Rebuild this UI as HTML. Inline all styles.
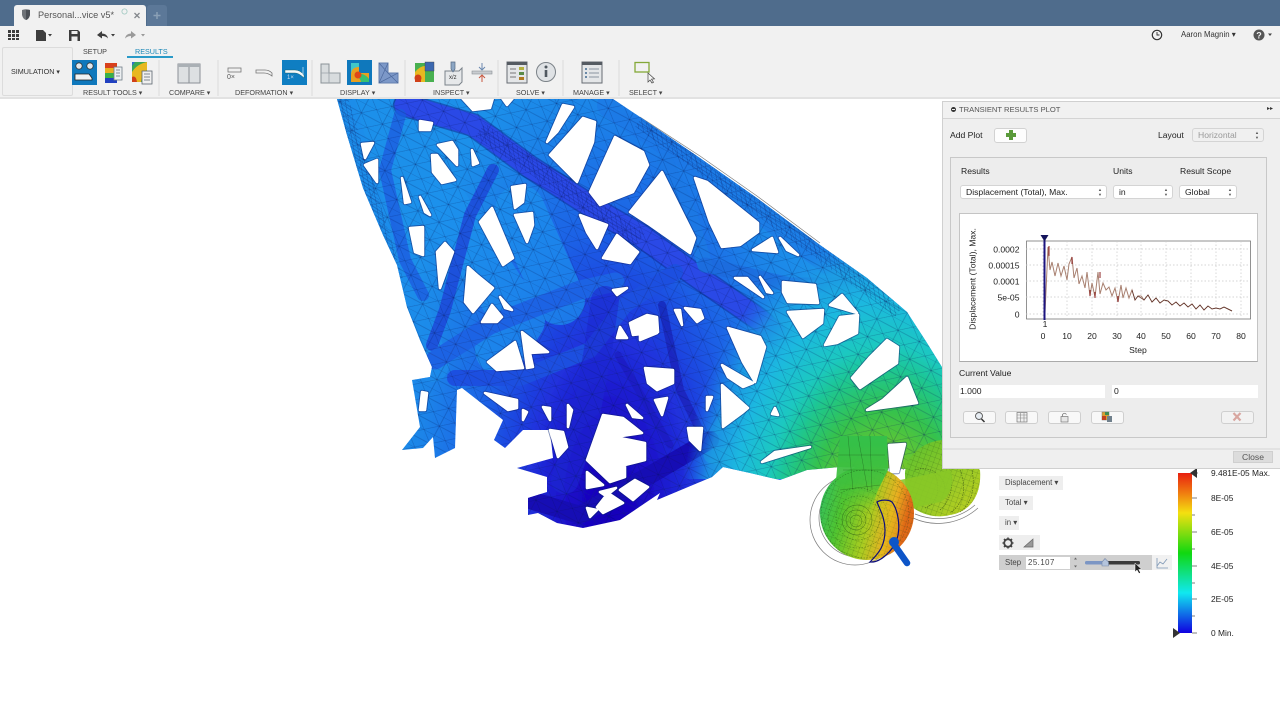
<!DOCTYPE html>
<html><head><meta charset="utf-8"><title>Simulation</title>
<style>
html,body{margin:0;padding:0;background:#fff;width:1280px;height:720px;overflow:hidden;font-family:"Liberation Sans",sans-serif;color:#333}
.a{position:absolute;white-space:nowrap;line-height:1}
.b{position:absolute;box-sizing:border-box}
.r{font-size:7.2px;color:#444}
.l{font-size:7.2px;color:#444;top:89px}
.d{font-size:8.6px;color:#222}
.sel{position:absolute;box-sizing:border-box;background:#fff;border:1px solid #d4d4d4;border-radius:3px;font-size:8.6px;color:#222;line-height:13px;padding-left:5px}
.sel i{position:absolute;right:4px;top:2px;font-style:normal;font-size:4px;line-height:4.5px;color:#555}
.btn{position:absolute;box-sizing:border-box;background:#f8f8f8;border:1px solid #cfcfcf;border-radius:3px;height:13px;top:411px;width:33px}
svg{position:absolute;left:0;top:0}
</style></head><body>

<!-- chrome and control backgrounds -->
<div style="position:absolute;left:0;top:0;z-index:0">
<div class="b" style="left:0;top:0;width:1280px;height:26px;background:#4f6c8c"></div>
<div class="b" style="left:0;top:26px;width:1280px;height:71px;background:#f1f1f1"></div>
<div class="b" style="left:0;top:97px;width:1280px;height:2px;background:#e2e2e2"></div>
<div class="b" style="left:14px;top:5px;width:132px;height:21px;background:#f1f1f1;border-radius:3px 3px 0 0"></div>
<div class="b" style="left:147px;top:5px;width:20px;height:21px;background:#5c7898;border-radius:3px 3px 0 0"></div>
<div class="b" style="left:2px;top:47px;width:71px;height:49px;background:#f0f0f0;border:1px solid #dcdcdc;border-radius:2px"></div>
<div class="b" style="left:127px;top:56px;width:46px;height:2px;background:#2a9ac8"></div>
<div class="b" style="left:999px;top:476px;width:64px;height:14px;background:#eee"></div>
<div class="b" style="left:999px;top:496px;width:34px;height:14px;background:#eee"></div>
<div class="b" style="left:999px;top:516px;width:20px;height:14px;background:#eee"></div>
<div class="b" style="left:999px;top:535px;width:41px;height:15px;background:#eee"></div>
<div class="b" style="left:999px;top:555px;width:153px;height:15px;background:#cfcfcf"></div>
<div class="b" style="left:1152px;top:555px;width:20px;height:15px;background:#f1f1f1"></div>
<div class="b" style="left:1026px;top:557px;width:44px;height:12px;background:#fff"></div>
</div>

<svg width="1280" height="720" viewBox="0 0 1280 720" style="z-index:1">
<defs>
<clipPath id="vp"><rect x="0" y="99" width="1280" height="621"/></clipPath>
<radialGradient id="base" gradientUnits="userSpaceOnUse" cx="0" cy="0" r="1" gradientTransform="translate(610 510) scale(225 470)">
<stop offset="0" stop-color="#1200b8"/><stop offset=".15" stop-color="#1a08c4"/><stop offset=".36" stop-color="#2030dc"/><stop offset=".6" stop-color="#1c62e6"/><stop offset=".85" stop-color="#1a84e8"/><stop offset="1" stop-color="#1c90ea"/>
</radialGradient>
<radialGradient id="heat" gradientUnits="userSpaceOnUse" cx="0" cy="0" r="1" gradientTransform="translate(885 525) scale(205 300)">
<stop offset="0" stop-color="#c8d420"/><stop offset=".2" stop-color="#78c828"/><stop offset=".38" stop-color="#36c24c"/><stop offset=".5" stop-color="#20c688"/><stop offset=".6" stop-color="#1cc8c0"/><stop offset=".75" stop-color="#1cb8e0"/><stop offset=".88" stop-color="#1ca0e4" stop-opacity=".8"/><stop offset="1" stop-color="#1a80e8" stop-opacity="0"/>
</radialGradient>
<linearGradient id="ball" x1="0" y1="0" x2="1" y2=".25">
<stop offset="0" stop-color="#2cc06a"/><stop offset=".32" stop-color="#50c430"/><stop offset=".62" stop-color="#a8cc20"/><stop offset=".84" stop-color="#e8b020"/><stop offset="1" stop-color="#e06818"/>
</linearGradient>
<linearGradient id="coil" x1="0" y1="0" x2="1" y2="1">
<stop offset="0" stop-color="#58c030"/><stop offset="1" stop-color="#c4d020"/>
</linearGradient>
<linearGradient id="armfade" gradientUnits="userSpaceOnUse" x1="0" y1="440" x2="0" y2="512">
<stop offset="0" stop-color="#34c048"/><stop offset=".6" stop-color="#40c03c" stop-opacity=".9"/><stop offset="1" stop-color="#50c430" stop-opacity="0"/>
</linearGradient>
<pattern id="mesh" width="24" height="20" patternUnits="userSpaceOnUse" patternTransform="rotate(28)">
<path d="M0 0H24M0 10H24M0 0L12 10L24 0M0 20L12 10L24 20M12 0V20" fill="none" stroke="#08185a" stroke-width=".5" stroke-opacity=".42"/>
</pattern>
<pattern id="fine" width="6" height="6" patternUnits="userSpaceOnUse" patternTransform="rotate(35)">
<path d="M0 0H6M0 3H6M0 0L6 6" fill="none" stroke="#06145a" stroke-width=".4" stroke-opacity=".6"/>
</pattern>
<pattern id="ballmesh" width="5" height="5" patternUnits="userSpaceOnUse" patternTransform="rotate(20)">
<path d="M0 0H5M0 0V5" fill="none" stroke="#163a10" stroke-width=".4" stroke-opacity=".55"/>
</pattern>
<filter id="soft" filterUnits="userSpaceOnUse" x="0" y="0" width="1280" height="720"><feGaussianBlur stdDeviation=".35"/></filter>
<clipPath id="sil"><path id="silp" d="M337 99 L613 99 L640 117 L700 158 L757 198 L820 245 L867 278 L907 312 L927 343 L945 372 L945 470 L840 467 L807 470 L780 480 L750 473 L723 467 L712 477 L657 500 L660 493 L620 520 L583 528 L557 523 L538 513 L528 515 L528 498 L547 492 L547 477 L517 468 L553 458 L550 430 L523 430 L505 448 L494 440 L503 420 L462 388 L457 390 L455 448 L435 458 L433 437 L423 448 L402 450 L420 427 L412 380 L430 377 L432 367 L420 340 L407 307 L397 265 L383 235 L363 188 L347 135Z"/></clipPath>
<g id="holes">
<path d="M362 144L373 143L365 158ZM365 165L377 160L377 182ZM462 98L493 98L490 108L473 110ZM502 98L513 98L507 105ZM420 121L432 123L430 130L420 130ZM438 145L452 142L457 150L457 165ZM432 155L437 155L455 180L442 183L433 172ZM472 150L478 163L473 165ZM402 178L410 202L405 203ZM410 228L423 227L423 255L415 252ZM420 197L430 215L425 212ZM437 252L445 243L453 252L440 288ZM512 187L525 185L523 202L515 208ZM480 222L492 208L513 258L503 265ZM515 215L532 213L533 225L527 242ZM468 267L477 275L493 288L473 312L465 302ZM550 155L583 118L595 122L593 142L577 182ZM563 105L573 107L557 132L547 142ZM615 137L643 152L648 165L633 192L600 205L590 192ZM580 215L607 225L597 248L587 232ZM617 235L638 252L630 263L603 258ZM630 212L662 172L695 238L690 253L650 225Z"/>
<path d="M695 178L707 182L758 223L758 232L740 245L722 247L710 222ZM753 250L772 238L777 252ZM780 238L798 255L787 250ZM735 278L747 278L763 297ZM760 277L772 293L767 292ZM783 282L815 285L818 303L788 302L783 292ZM842 295L857 313L830 305ZM788 312L823 310L822 323L803 337ZM840 317L858 315L857 333L837 343L825 345ZM887 340L898 347L897 363L860 388L852 378L870 357ZM907 378L917 403L867 410L883 400ZM728 328L760 337L765 347L755 382L743 362ZM722 365L753 383L743 387L728 377ZM722 385L748 408L742 413L723 427ZM688 428L702 428L700 450L690 440ZM707 397L712 397L707 410ZM685 308L700 310L703 318L697 322ZM675 310L680 310L682 325ZM640 332L657 333L640 340ZM762 462L810 447L775 452ZM775 408L778 415L772 414Z"/>
<path d="M482 322L492 305L502 317L497 322ZM500 297L512 310L505 308ZM522 332L548 352L530 353L533 367L527 368ZM488 362L515 342L523 368L497 370ZM485 393L517 400L517 408L508 410ZM620 327L627 338L617 338ZM630 323L647 315L657 317L658 332L633 335ZM613 290L627 288L617 295ZM645 368L673 370L673 383L657 390L648 383ZM655 400L667 398L662 415ZM627 405L642 418L633 417ZM603 415L623 418L642 433L615 437L645 443L645 460L625 465L625 477L610 482L587 460ZM550 430L563 432L567 447L558 457ZM587 472L603 485L587 488ZM597 507L608 493L623 503L603 513ZM620 490L635 480L648 487L633 500ZM587 508L597 510L590 517ZM543 407L550 408L550 420ZM568 405L572 410L568 427ZM523 410L527 412L523 420ZM422 392L427 393L425 410L420 410ZM600 492L616 488L606 496Z"/>
<path d="M889 445L905 444L898 472L891 472Z"/>
</g>
</defs>

<g clip-path="url(#vp)">
<g filter="url(#soft)">
<!-- grey undeformed outlines -->
<g fill="none" stroke="#7c7c7c" stroke-width=".7">
<circle cx="855" cy="520" r="45"/><circle cx="858" cy="518" r="39"/>
<path d="M903 470C912 450 925 442 945 445M899 472C908 447 925 438 945 440"/>
<path d="M915 514C935 522 958 520 975 505M913 518C935 528 960 524 978 508"/>
<path d="M640 117L700 156L757 196L820 243M664 173L696 236M760 222L756 233"/>
</g>

<use href="#silp" fill="url(#base)"/>
<g clip-path="url(#sil)">
<g fill="none" stroke-linecap="round" stroke-linejoin="round">
<path d="M337 99L365 200L400 275L432 365" stroke="#1e8cea" stroke-width="34" opacity=".8"/>
<path d="M440 200L520 320L500 350M520 210L560 300" stroke="#1c92ec" stroke-width="50" opacity=".7"/>
<path d="M610 105L700 165L820 255L880 300L925 360L930 440" stroke="#1c74e4" stroke-width="26" opacity=".6"/>
<path d="M405 105L473 125L530 167L605 215L640 235L695 275L760 320L810 365L845 415L865 480" stroke="#0a2090" stroke-width="24" opacity=".5"/>
<path d="M405 105L473 125L530 167L605 215L640 235L695 275L760 320L810 365L845 415L865 480" stroke="#2a48e6" stroke-width="21"/>
<path d="M493 170L470 215L445 310L432 345" stroke="#1c48d8" stroke-width="12" opacity=".85"/>
<path d="M400 115L385 170L405 260L423 295" stroke="#1c5ce0" stroke-width="12" opacity=".8"/>
<path d="M435 360L490 325L580 290L615 282" stroke="#1e64e4" stroke-width="19"/>
<path d="M455 378L520 378L590 350L625 305L675 272" stroke="#1e50e0" stroke-width="16"/>
<path d="M605 300L598 350L585 420L565 480" stroke="#1c28d0" stroke-width="28" opacity=".6"/>
<path d="M662 305L680 390L712 455" stroke="#1616a8" stroke-width="8" opacity=".55"/>
<path d="M618 355L670 445" stroke="#1818b8" stroke-width="7" opacity=".55"/>
<path d="M665 160L690 215L705 265" stroke="#1a78e4" stroke-width="15"/>
<path d="M705 265L790 285L845 285" stroke="#1a6adc" stroke-width="15" opacity=".8"/>
<path d="M715 430L745 395L785 345L835 290" stroke="#1a70dc" stroke-width="11" opacity=".8"/>
<path d="M712 455L770 462L850 440" stroke="#1c70d8" stroke-width="17"/>
<path d="M530 500L580 515L650 475L710 440" stroke="#1408b4" stroke-width="18"/>
<path d="M880 355L905 400L880 420L845 425" stroke="#1c8cd8" stroke-width="14"/>
</g>
<rect x="330" y="99" width="620" height="380" fill="url(#heat)"/>
<rect x="330" y="99" width="620" height="440" fill="url(#mesh)"/>
<path d="M340 99L395 280M640 120L900 310M480 130L640 240" stroke="url(#fine)" stroke-width="16" fill="none"/>
</g>

<!-- holes: dark rim then white -->
<use href="#holes" fill="#0a1e70" stroke="#0a1e70" stroke-width="4.4" stroke-linejoin="round" opacity=".5"/>
<use href="#holes" fill="#fff" stroke="#fff" stroke-width="2.6" stroke-linejoin="round"/>

<!-- coil -->
<path d="M905 475C905 455 925 440 945 440L980 470C982 495 970 512 950 515C930 520 912 510 906 500Z" fill="url(#coil)"/>
<path d="M905 475C905 455 925 440 945 440L980 470C982 495 970 512 950 515C930 520 912 510 906 500Z" fill="url(#ballmesh)"/>
<g fill="none" stroke="#253a10" stroke-width=".6" stroke-opacity=".7" stroke-dasharray="1.5 1"><path d="M948 465C955 480 952 500 940 510M935 475C942 490 935 505 925 508M960 470C968 490 962 505 950 513M972 470C976 490 970 505 960 512M915 470C930 465 945 475 945 490"/></g>
<path d="M900 480L950 470C956 480 950 498 940 502L903 510Z" fill="#88c828" opacity=".9"/>

<!-- ball -->
<circle cx="867" cy="513" r="47" fill="url(#ball)"/>
<circle cx="867" cy="513" r="47" fill="url(#ballmesh)"/>
<path d="M840 436L887 436L888 470L878 490L870 512L850 512L836 480Z" fill="url(#armfade)"/>
<g fill="none" stroke="#123a10" stroke-width=".5" stroke-opacity=".6">
<circle cx="857" cy="520" r="15"/><circle cx="856" cy="520" r="10"/><circle cx="856" cy="521" r="6"/><circle cx="858" cy="518" r="22" stroke-dasharray="1.5 1.5"/><circle cx="858" cy="518" r="30" stroke-dasharray="1.5 1.5"/><circle cx="865" cy="514" r="44" stroke-dasharray="1.5 1.5"/>
<path d="M848 436L853 490M858 436L868 492M870 436L872 490M843 470L885 470M838 455L885 455M840 490L880 485" stroke-opacity=".45"/>
</g>
<!-- crescent + arrow -->
<path d="M877 502C880 500 888 499 892 502C898 510 900 525 898 535C895 550 880 563 870 562C880 552 885 545 885 530C885 518 880 510 877 502Z" fill="#e4c41c" fill-opacity=".35" stroke="#10107c" stroke-width="1.2"/>
<path d="M893 543L907 563" stroke="#0f55c8" stroke-width="6.5" stroke-linecap="round"/>
<circle cx="894" cy="542" r="5" fill="#0f55c8"/>
</g>
</g>

<!-- ribbon icons -->
<g>
<rect x="72" y="60" width="25" height="25" fill="#0f78bc"/>
<circle cx="79" cy="66" r="3.2" fill="#dfe8ee" stroke="#333" stroke-width=".8"/><circle cx="90" cy="66" r="3.2" fill="#dfe8ee" stroke="#333" stroke-width=".8"/>
<path d="M75 74h14l3 4v2H75z" fill="#eef2f4" stroke="#222" stroke-width=".8"/>
<rect x="105" y="63" width="12" height="5" fill="#d8401c"/><rect x="105" y="68" width="12" height="5" fill="#e8b020"/><rect x="105" y="73" width="12" height="5" fill="#38b048"/><rect x="105" y="78" width="12" height="5" fill="#2040c0"/>
<rect x="114" y="67" width="8" height="13" fill="#eceff1" stroke="#707c88" stroke-width=".8"/><path d="M116 70h4M116 73h4M116 76h4" stroke="#606c78" stroke-width=".8"/>
<rect x="132" y="62" width="15" height="20" fill="#38a858"/><path d="M132 82V72Q137 64 147 62V70Q142 74 141 82Z" fill="#e8b820"/><path d="M132 82V77Q136 75 137 82Z" fill="#d04018"/><path d="M147 62H135L132 66V62Z" fill="#3070c8"/>
<rect x="142" y="71" width="10" height="13" fill="#f0f0f0" stroke="#5c6670" stroke-width=".8"/><path d="M144 74h6M144 77h6M144 80h6" stroke="#5c6670" stroke-width=".7"/>
<rect x="178" y="64" width="22" height="19" fill="#dde0e2" stroke="#8a9096"/><rect x="178" y="64" width="22" height="3" fill="#aab0b5"/><path d="M189 67V83" stroke="#8a9096"/>
<rect x="228" y="68" width="13" height="4" fill="#f0f0f0" stroke="#777" stroke-width=".8"/>
<path d="M256 70h9q4 0 7 3v3q-4-3-8-3h-8z" fill="#f0f0f0" stroke="#777" stroke-width=".8"/>
<rect x="282" y="60" width="25" height="25" fill="#0f7ec2"/><path d="M285 70h10q5 0 9 5v3q-5-5-9-5h-10z" fill="#f4f8fa" stroke="#155" stroke-width=".4"/><path d="M303 67v8" stroke="#bde" stroke-width=".8"/>
<path d="M321 64h8v9h11v10h-19z" fill="#d8dcde" stroke="#8a9298"/><path d="M321 73h19M329 73v10" stroke="#9aa2a8" stroke-width=".8"/>
<rect x="347" y="60" width="25" height="25" fill="#0f78bc"/><path d="M351 63h8v10h10v9h-18z" fill="#e8a020"/><path d="M351 63h8v4q-8 0-8 8z" fill="#40c8c8"/><path d="M369 82h-8q-1-5-6-6v-3q10 0 14 6z" fill="#38c070"/><circle cx="358" cy="75" r="3.5" fill="#e04818"/>
<path d="M379 63h9v10h10v10h-19z" fill="#7c98c8" stroke="#6480b0"/><path d="M379 63l9 10M388 63l-9 20M388 73l10 10M398 73l-19 10" stroke="#4c689c" stroke-width=".7"/>
<rect x="415" y="63" width="19" height="19" fill="#48b050"/><path d="M415 82V72Q420 66 425 66V82Z" fill="#e8b820"/><circle cx="418" cy="78" r="3.5" fill="#d04018"/><rect x="425" y="62" width="9" height="9" fill="#3c68b0" stroke="#444" stroke-width=".4"/><rect x="415" y="76" width="6" height="6" fill="#d04018"/>
<path d="M445 71h14l3-3v14l-3 3h-14z" fill="#e6e8ea" stroke="#7a828a"/><path d="M451 62h4v7l-2 3-2-3z" fill="#8ca6c4" stroke="#586c84" stroke-width=".7"/>
<rect x="472" y="71" width="20" height="3" fill="#c8ccd0" stroke="#8a9096" stroke-width=".6"/><path d="M482 63v7M479 67l3 3 3-3" fill="none" stroke="#6a88b0"/><path d="M482 75v7M479 78l3-3 3 3" fill="none" stroke="#c85840"/>
<rect x="507" y="62" width="20" height="21" fill="#e4e6e8" stroke="#666c72"/><rect x="507" y="62" width="20" height="3" fill="#555b62"/><path d="M510 69h6M510 73h6M510 77h6" stroke="#777"/><rect x="519" y="67" width="5" height="3" fill="#b4b040"/><rect x="519" y="72" width="5" height="3" fill="#5a8a48"/><rect x="519" y="77" width="5" height="3" fill="#b07820"/>
<circle cx="546" cy="72" r="9.5" fill="#dfe2e5" stroke="#7b8288"/><rect x="544.7" y="70" width="2.6" height="7" fill="#505860"/><circle cx="546" cy="67" r="1.5" fill="#505860"/>
<rect x="582" y="62" width="20" height="21" fill="#e4e6e8" stroke="#666c72"/><rect x="582" y="62" width="20" height="3" fill="#555b62"/><path d="M589 69h10M589 73h10M589 77h10" stroke="#8a94a0"/><path d="M585 69h2M585 73h2M585 77h2" stroke="#406890" stroke-width="1.5"/>
<rect x="635" y="62.5" width="14" height="9.5" fill="none" stroke="#84a838" stroke-width="1.3"/><path d="M648 73l0 9 2-2 2 3 1.5-.8-2-3 3-.3z" fill="#f4f4f4" stroke="#444" stroke-width=".7"/>
</g>
<path d="M159 60V96M218 60V96M312 60V96M405 60V96M498 60V96M563 60V96M619 60V96" stroke="#dcdcdc"/>

<!-- top toolbar icons -->
<g fill="#3d3d3d">
<path d="M8 30h3v3H8zM12 30h3v3h-3zM16 30h3v3h-3zM8 34h3v3H8zM12 34h3v3h-3zM16 34h3v3h-3zM8 38h3v2H8zM12 38h3v2h-3zM16 38h3v2h-3z"/>
<path d="M36 30h7l3 3v8H36z"/><path d="M48 34h4l-2 2.5z"/>
<path d="M69 30h9l2 2v9H69z"/><rect x="71.5" y="31" width="6" height="3" fill="#eee"/><rect x="71.5" y="36.5" width="6" height="4.5" fill="#eee"/>
<path d="M97 35l5-4v2.500q5 0 6 5q-2-2.500-6-2.500V38.500z"/><path d="M111 34h4l-2 2.500z"/>
<path d="M136 35l-5-4v2.500q-5 0-6 5q2-2.500 6-2.500V38.500z" fill="#9a9a9a"/><path d="M141 34h4l-2 2.500z" fill="#9a9a9a"/>
<path d="M22 10q4-1.500 8 0v5q-1 4-4 5q-3-1-4-5z" fill="#6f7378"/><path d="M26 10q2.500-.5 4 0v5q-1 4-4 5z" fill="#4c5056"/>
<path d="M134.500 13l5 5m0-5l-5 5" stroke="#85898d" stroke-width="1.300" fill="none"/>
<path d="M157 12v7M153.500 15.500h7" stroke="#8aa0b6" stroke-width="1.500" fill="none"/>
<circle cx="124.500" cy="11.500" r="2.600" fill="none" stroke="#9fc8c0" stroke-width=".8"/>
<circle cx="1157" cy="35" r="4.700" fill="none" stroke="#333" stroke-width="1.200"/><path d="M1157 32v3h2.500" fill="none" stroke="#333" stroke-width=".9"/>
<circle cx="1259" cy="35" r="5.500" fill="#555"/><path d="M1268 33.500h4l-2 2.500z" fill="#444"/>
<text x="1259" y="38.500" text-anchor="middle" font-family="Liberation Sans" font-size="9" font-weight="bold" fill="#f1f1f1">?</text>
</g>

<!-- right-side legend graphics -->
<defs><linearGradient id="lg" x1="0" y1="0" x2="0" y2="1"><stop offset="0" stop-color="#e82010"/><stop offset=".13" stop-color="#f08010"/><stop offset=".25" stop-color="#f4e010"/><stop offset=".5" stop-color="#10d810"/><stop offset=".75" stop-color="#10e8f0"/><stop offset="1" stop-color="#1000e0"/></linearGradient></defs>
<rect x="1178" y="473" width="14" height="160" fill="url(#lg)"/>
<path d="M1192 473h6M1192 498h5M1192 515h3M1192 532h5M1192 549h3M1192 566h5M1192 583h3M1192 599h5M1192 616h3M1192 633h5" stroke="#555" stroke-width=".8"/>
<path d="M1197 468v10l-7-5zM1173 628v10l7-5z" fill="#333"/>
<circle cx="1008" cy="543" r="3.800" fill="none" stroke="#444" stroke-width="1.800"/>
<path d="M1008 537.500v2M1008 546.500v2M1002.500 543h2M1011.500 543h2M1004 539l1.500 1.500M1010.500 545.500l1.500 1.500M1012 539l-1.500 1.500M1005.500 545.500l-1.500 1.500" stroke="#444" stroke-width="1.600"/>
<path d="M1024 547l9-8v8z" fill="#999" stroke="#666" stroke-width=".7"/>
<rect x="1085" y="561" width="20" height="3.500" rx="1.500" fill="#7c96c4"/><rect x="1105" y="561" width="35" height="3.500" rx="1.500" fill="#3a3a3a"/>
<path d="M1102 566v-4l3-3.500 3.500 3.500v4z" fill="#b4c4dc" stroke="#7a8aa8" stroke-width=".6"/>
<path d="M1157 558v10h11" fill="none" stroke="#7c96b4" stroke-width=".8"/><path d="M1157 566l3-4 3 2 4-5" fill="none" stroke="#7c96b4" stroke-width=".8"/>
<path d="M1074 559.500l1.500-2 1.500 2zM1074 565.500l1.500 2 1.500-2z" fill="#666"/>
<path d="M1135 563v9l2-2 2 3.500 1.500-.8-1.800-3.200 2.800-.3z" fill="#222" stroke="#fff" stroke-width=".5"/>
</svg>

<div style="position:absolute;left:0;top:0;z-index:2">
<span class="a" style="left:38px;top:11px;font-size:9.2px;color:#555">Personal...vice v5*</span>
<span class="a" style="left:1181px;top:31px;font-size:7.8px;color:#333">Aaron Magnin ▾</span>
<span class="a r" style="left:83px;top:48px">SETUP</span>
<span class="a r" style="left:135px;top:48px;color:#1c88b8">RESULTS</span>
<span class="a r" style="left:11px;top:68px;color:#333">SIMULATION ▾</span>
<span class="a l" style="left:83px">RESULT TOOLS ▾</span>
<span class="a l" style="left:169px">COMPARE ▾</span>
<span class="a l" style="left:235px">DEFORMATION ▾</span>
<span class="a l" style="left:340px">DISPLAY ▾</span>
<span class="a l" style="left:433px">INSPECT ▾</span>
<span class="a l" style="left:516px">SOLVE ▾</span>
<span class="a l" style="left:573px">MANAGE ▾</span>
<span class="a l" style="left:629px">SELECT ▾</span>
<span class="a" style="left:227px;top:74px;font-size:7px;color:#555">0×</span>
<span class="a" style="left:287px;top:75px;font-size:6px;color:#cde">1×</span>
<span class="a" style="left:449px;top:75px;font-size:6px;color:#333">x/z</span>
<span class="a" style="left:1005px;top:479px;font-size:7.8px;color:#444">Displacement ▾</span>
<span class="a" style="left:1005px;top:499px;font-size:7.8px;color:#444">Total ▾</span>
<span class="a" style="left:1005px;top:519px;font-size:7.8px;color:#444">in ▾</span>
<span class="a" style="left:1005px;top:559px;font-size:7.8px;color:#444">Step</span>
<span class="a" style="left:1028px;top:559px;font-size:7.8px;color:#444;letter-spacing:.5px">25.107</span>
<span class="a" style="left:1211px;top:469px;font-size:8.4px;color:#222">9.481E-05 Max.</span>
<span class="a" style="left:1211px;top:494px;font-size:8.4px;color:#222">8E-05</span>
<span class="a" style="left:1211px;top:528px;font-size:8.4px;color:#222">6E-05</span>
<span class="a" style="left:1211px;top:562px;font-size:8.4px;color:#222">4E-05</span>
<span class="a" style="left:1211px;top:595px;font-size:8.4px;color:#222">2E-05</span>
<span class="a" style="left:1211px;top:629px;font-size:8.4px;color:#222">0 Min.</span>
</div>

<!-- results panel -->
<div class="b" style="left:942px;top:101px;width:338px;height:368px;background:#efefef;border:1px solid #d0d0d0;border-right:0;z-index:3">
<div class="b" style="left:0;top:0;width:100%;height:17px;border-bottom:1px solid #d4d4d4;background:#f1f1f1"></div>
<div class="b" style="left:7px;top:55px;width:317px;height:281px;border:1px solid #c8c8c8;background:#ededed"></div>
<div class="b" style="left:0;top:346px;width:100%;height:2px;background:#e2e2e2"></div>
</div>
<div style="position:absolute;left:0;top:0;z-index:4">
<div class="b" style="left:951px;top:107px;width:5px;height:5px;border-radius:50%;background:#333"></div>
<div class="b" style="left:952px;top:109px;width:3px;height:1px;background:#eee"></div>
<span class="a" style="left:959px;top:106px;font-size:7.6px;color:#555">TRANSIENT RESULTS PLOT</span>
<span class="a" style="left:1267px;top:106px;font-size:6px;color:#333">▸▸</span>
<span class="a d" style="left:950px;top:131px">Add Plot</span>
<div class="b" style="left:994px;top:128px;width:33px;height:15px;background:#fdfdfd;border:1px solid #d2d2d2;border-radius:3px"></div>
<div class="b" style="left:1009px;top:130px;width:3.5px;height:10px;background:#5a9a3a"></div>
<div class="b" style="left:1006px;top:133px;width:10px;height:3.5px;background:#5a9a3a"></div>
<span class="a d" style="left:1158px;top:131px">Layout</span>
<div class="sel" style="left:1192px;top:128px;width:72px;height:14px;color:#999;background:#f0f0f0">Horizontal<i>▲<br>▼</i></div>
<span class="a d" style="left:961px;top:167px">Results</span>
<span class="a d" style="left:1113px;top:167px">Units</span>
<span class="a d" style="left:1180px;top:167px">Result Scope</span>
<div class="sel" style="left:960px;top:185px;width:147px;height:14px">Displacement (Total), Max.<i>▲<br>▼</i></div>
<div class="sel" style="left:1113px;top:185px;width:60px;height:14px">in<i>▲<br>▼</i></div>
<div class="sel" style="left:1179px;top:185px;width:58px;height:14px">Global<i>▲<br>▼</i></div>
<div class="b" style="left:959px;top:213px;width:299px;height:149px;background:#fff;border:1px solid #c4c4c4;border-bottom-color:#aaa"></div>
<svg width="1280" height="720" viewBox="0 0 1280 720" style="pointer-events:none">
<rect x="1026.5" y="241" width="224" height="78" fill="#fff" stroke="#777" stroke-width=".8"/>
<path d="M1043 241V319M1067 241V319M1092 241V319M1117 241V319M1141 241V319M1166 241V319M1191 241V319M1216 241V319M1241 241V319M1026 249H1250M1026 265H1250M1026 281H1250M1026 297H1250M1026 314H1250" stroke="#c8c8c8" stroke-width=".7" stroke-dasharray="1.5 2" fill="none"/>
<polyline fill="none" stroke="#a88070" stroke-width="1" points="1045,313 1048,247 1050,270 1052,262 1055,276 1058,263 1061,276 1064,266 1067,280 1069,264 1072,257 1074,278 1077,268 1079,284 1082,276 1085,288 1087,272 1090,296 1092,283 1095,297 1098,272 1100,294 1103,283 1106,290 1109,287 1112,296 1115,288 1118,302 1121,285 1123,298 1126,288 1129,298 1132,290 1135,300 1138,296 1141,296 1144,300 1148,295 1152,302 1156,298 1160,303 1164,300 1168,301 1172,305 1176,302 1180,306 1184,303 1188,307 1192,304 1196,309 1200,305 1204,310 1208,306 1212,309 1216,308 1220,309 1224,307 1228,309 1232,311"/>
<path d="M1049 246V256M1072 257V264M1100 272V278M1095 292V298M1118 296V302M1090 290V296" stroke="#8a1c1c" stroke-width="1" fill="none"/>
<polyline fill="none" stroke="#5c3028" stroke-width=".7" points="1132,290 1135,300 1138,296 1144,300 1148,295 1152,302 1156,298 1160,303 1164,300 1168,301 1172,305 1176,302 1180,306 1184,303 1188,307 1192,304 1196,309 1200,305 1204,310 1208,306 1212,309 1216,308 1220,309 1224,307 1228,309 1232,311"/>
<path d="M1044.5 240V320" stroke="#1c1480" stroke-width="2"/>
<path d="M1040.5 235h8l-4 6.500z" fill="#14145c"/>
<text x="973" y="279" transform="rotate(-90 973 279)" text-anchor="middle" dominant-baseline="middle" font-size="8.6" fill="#222" font-family="Liberation Sans">Displacement (Total), Max.</text>
<g font-family="Liberation Sans" font-size="8.6" fill="#222" text-anchor="end">
<text x="1019.5" y="252.5">0.0002</text><text x="1019.5" y="268.5">0.00015</text><text x="1019.5" y="284.5">0.0001</text><text x="1019.5" y="300.5">5e-05</text><text x="1019.5" y="317.5">0</text>
</g>
<g font-family="Liberation Sans" font-size="8.6" fill="#222" text-anchor="middle">
<text x="1045" y="327">1</text><text x="1043" y="339">0</text><text x="1067" y="339">10</text><text x="1092" y="339">20</text><text x="1117" y="339">30</text><text x="1141" y="339">40</text><text x="1166" y="339">50</text><text x="1191" y="339">60</text><text x="1216" y="339">70</text><text x="1241" y="339">80</text><text x="1138" y="353">Step</text>
</g>
</svg>
<span class="a d" style="left:959px;top:369px">Current Value</span>
<div class="b d" style="left:959px;top:385px;width:146px;height:13px;background:#fff;line-height:13px;padding-left:1px;position:absolute">1.000</div>
<div class="b d" style="left:1112px;top:385px;width:146px;height:13px;background:#fff;line-height:13px;padding-left:2px;position:absolute">0</div>
<div class="btn" style="left:963px"></div>
<div class="btn" style="left:1005px"></div>
<div class="btn" style="left:1048px"></div>
<div class="btn" style="left:1091px"></div>
<div class="btn" style="left:1221px;background:#f2f2f2"></div>
<svg width="1280" height="720" viewBox="0 0 1280 720" style="pointer-events:none">
<circle cx="979" cy="416" r="3.5" fill="#e6ecf2" stroke="#555" stroke-width=".9"/><path d="M981.5 419l3 3" stroke="#333" stroke-width="1.5"/>
<rect x="1017" y="412.5" width="10" height="9.5" fill="#f0f0f0" stroke="#777" stroke-width=".7"/><path d="M1017 415h10M1017 418h10M1020.5 413v9M1024 413v9" stroke="#888" stroke-width=".6"/>
<rect x="1061" y="416.5" width="7" height="5.5" fill="#e6e6e6" stroke="#777" stroke-width=".7"/><path d="M1062.5 416.5v-2q2-2.500 4 0" fill="none" stroke="#777" stroke-width=".8"/>
<rect x="1102" y="412" width="7" height="8" fill="#d8a030" stroke="#777" stroke-width=".5"/><rect x="1102" y="416" width="4" height="4" fill="#c04020"/><rect x="1107" y="416" width="5" height="6" fill="#70808c"/><rect x="1105" y="412" width="4" height="3" fill="#3f8a50"/>
<path d="M1233.5 413l7 7.500m0-7.500l-7 7.500" stroke="#d8a6a0" stroke-width="2.2"/>
</svg>
<div class="b" style="left:1233px;top:451px;width:40px;height:12px;background:#dcdcdc;border:1px solid #cfcfcf;font-size:8.6px;color:#555;text-align:center;line-height:11px;position:absolute">Close</div>
</div>
</body></html>
